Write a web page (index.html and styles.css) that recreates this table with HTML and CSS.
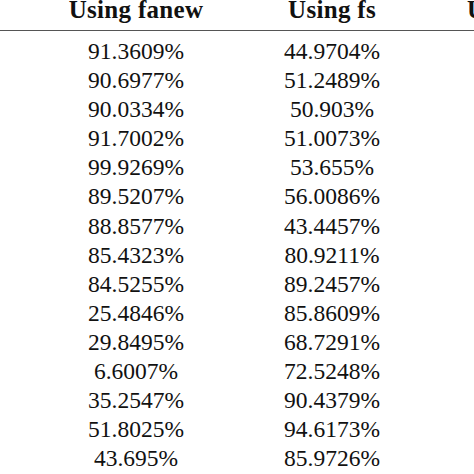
FILE: index.html
```html
<!DOCTYPE html>
<html>
<head>
<meta charset="utf-8">
<link rel="stylesheet" href="styles.css">
</head>
<body>
<div class="table">
  <div class="head">
    <div class="th">Using fanew</div>
    <div class="th">Using fs</div>
    <div class="th">Using fnew</div>
  </div>
  <div class="rows">
    <div class="col">
      <div>91.3609%</div><div>90.6977%</div><div>90.0334%</div><div>91.7002%</div><div>99.9269%</div>
      <div>89.5207%</div><div>88.8577%</div><div>85.4323%</div><div>84.5255%</div><div>25.4846%</div>
      <div>29.8495%</div><div>6.6007%</div><div>35.2547%</div><div>51.8025%</div><div>43.695%</div>
    </div>
    <div class="col">
      <div>44.9704%</div><div>51.2489%</div><div>50.903%</div><div>51.0073%</div><div>53.655%</div>
      <div>56.0086%</div><div>43.4457%</div><div>80.9211%</div><div>89.2457%</div><div>85.8609%</div>
      <div>68.7291%</div><div>72.5248%</div><div>90.4379%</div><div>94.6173%</div><div>85.9726%</div>
    </div>
    <div class="col"></div>
  </div>
</div>
</body>
</html>
```
FILE: styles.css
```css
html, body {
  margin: 0;
  padding: 0;
  background: #fff;
  overflow: hidden;
}
body {
  width: 474px;
  height: 474px;
  font-family: "Liberation Serif", serif;
}
.table {
  width: 623px;
  font-family: "Liberation Serif", serif;
  color: #111;
}
.head {
  display: grid;
  grid-template-columns: 196px 196px 196px;
  border-bottom: 1px solid #555;
  padding-left: 38px;
}
.th {
  font-weight: bold;
  font-size: 25px;
  letter-spacing: 0.3px;
  line-height: 18px;
  padding-top: 1px;
  padding-bottom: 11px;
  text-align: center;
  white-space: nowrap;
}
.rows {
  display: grid;
  grid-template-columns: 196px 196px 196px;
  padding-left: 38px;
  padding-top: 6px;
}
.col {
  font-size: 23.5px;
  line-height: 29.1px;
  text-align: center;
}
```
